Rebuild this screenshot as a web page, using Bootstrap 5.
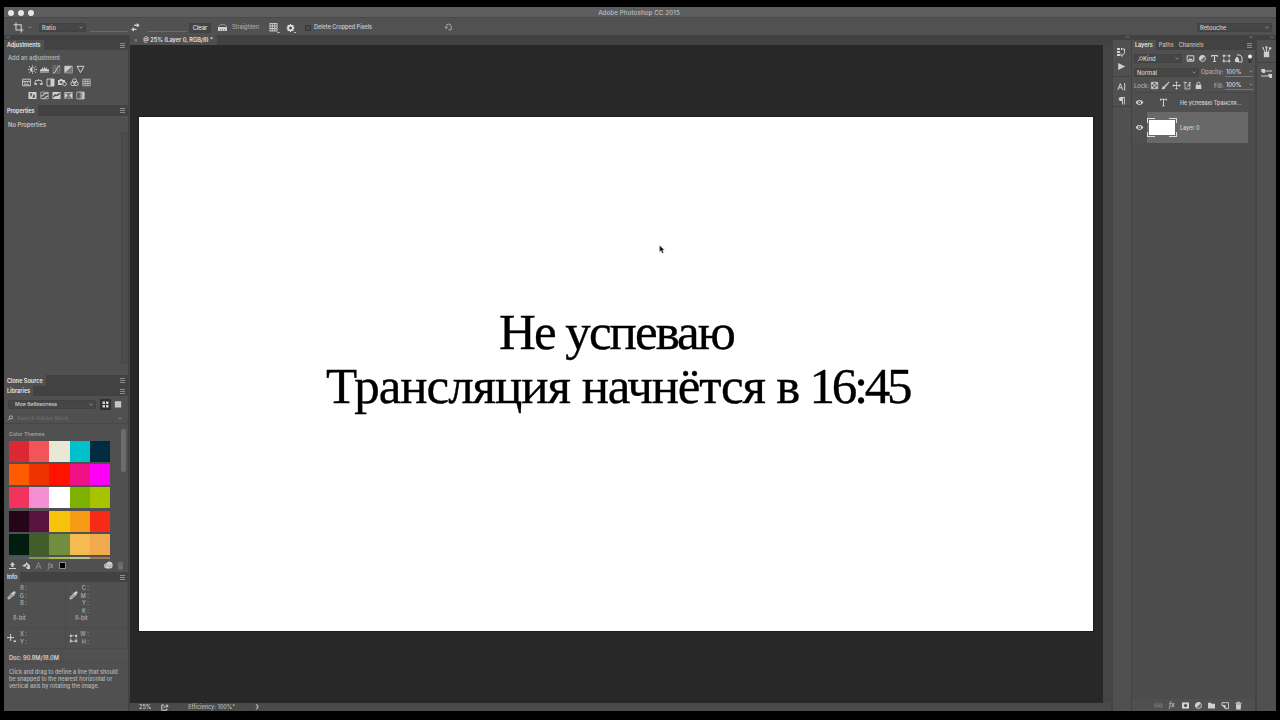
<!DOCTYPE html>
<html lang="en">
<head>
<meta charset="utf-8">
<title>Adobe Photoshop CC 2015</title>
<meta name="viewport" content="width=device-width, initial-scale=1">
<link href="https://cdn.jsdelivr.net/npm/bootstrap@5.3.0/dist/css/bootstrap.min.css" rel="stylesheet">
<style>
body{background:#000;width:1280px;height:720px;overflow:hidden;padding:7px 4px 9px;font:500 5.8px/7px Inter,"Liberation Sans",sans-serif;color:#d2d2d2}
.app{width:1272px;height:704px;background:#434343}
.t{white-space:nowrap;display:block}
.dim{color:#a9a9a9}.faint{color:#6c6c6c}
svg{display:block;fill:#d0d0d0;flex:none}
.i{width:9px;height:9px}
.s{fill:none;stroke:#d0d0d0}
.titlebar{height:11px;background:#5d5d5d;border-bottom:1px solid #494949;padding-top:1px}
.titlebar .lights{width:80px;padding-left:4px;gap:4px}
.titlebar i{width:6px;height:6px;border-radius:50%;background:#e6e6e6;display:block}
.titlebar .name{color:#bdbdbd;font-size:6.2px;letter-spacing:.1px;width:1110px;text-align:center}
.options{height:17px;background:#515151;display:grid;align-items:center;padding-top:2px;
 grid-template-columns:9px 11px 5px 10px 47px 4px 38px 3px 11px 6px 39px 2px 22px 7px 9px 5px 32px 5px 11px 6px 10px 9px 7px 2px 80px 50px 9px 744px 75px}
.options .cut{font-size:5.5px}
.pick{height:9px;background:#464646;border:1px solid #424242;border-radius:1px;padding:0 2px;display:flex;align-items:center;justify-content:space-between}
.caret{flex:none;width:4px;height:3px;fill:none;stroke:#999;stroke-width:.8}
.field{border-bottom:1px solid #6b6b6b;height:9px}
.clearbtn{background:#434343;height:10px;border-radius:1px;line-height:10px;text-align:center;color:#e6e6e6}
.check{width:6px;height:6px;border:1px solid #383838;background:#494949}
.main{height:676px}
.leftdock{width:125px;background:#505050;border-right:1px solid #424242}
.strip{height:5px;background:#414141;color:#888;font-size:5px;line-height:5px;padding:0 2px}
.head{background:#424242;padding-right:3px;height:10px}
.head .on{background:#505050;color:#e9e9e9;font-weight:600;font-size:5.5px;padding:0 3px;height:100%;line-height:11px}
.head .off{color:#b5b5b5;font-weight:600;line-height:11px;font-size:5.5px}
.burger{width:5px;height:5px;border-top:1px solid #8c8c8c;border-bottom:1px solid #8c8c8c}
.burger:after{content:"";display:block;height:1px;background:#8c8c8c;margin-top:1px}
.adj{height:55px;padding:4px 0 0 4px;color:#bdbdbd}
.adj .icons{width:96px;padding-top:1.5px}
.adj .icons>div{height:13.4px;gap:3px;justify-content:center;display:flex;align-items:center}
.props{height:259px;padding:5px 0 0 4px}
.props .rail{width:7px;height:232px;background:#4b4b4b;border-left:1px solid #464646;margin-top:11px}
.head.tall{height:11px}.head.tall .on{line-height:12px}
.libs{height:176px}
.libs .top{height:17px;display:grid;grid-template-columns:88px 4px 11px 2px 10px;padding-left:4px;align-items:center}
.libs .cut{font-size:5.3px}
.libs .lib{font-size:5.2px}
.viewbtn{height:11px;background:#303030;border-radius:1px;display:flex;align-items:center;justify-content:center}
.search{height:11px;padding:0 2px 0 3px;border-bottom:1px solid #474747}
.themes{height:134px;padding:7px 0 0 5px}
.themes .list{width:102px;height:118px;margin-top:2.5px;overflow:hidden}
.themes .rowc{height:21px;margin-bottom:2.4px;width:101px}
.themes .rowc b{flex:1;display:block}
.thumb{width:5px;height:43px;border-radius:3px;background:#6d6d6d;margin:-2px 2px 0 0}
.lfoot{height:14px;display:grid;grid-template-columns:9px 5px 9px 3px 9px 3px 9px 3px 9px 37px 9px 3px 9px;padding-left:4px;align-items:center}
.info{color:#b0b0b0;font-size:5.5px}
.cells{display:grid;grid-template-columns:62px 62px}
.cells>div{border-right:1px solid #4a4a4a;border-bottom:1px solid #4a4a4a}
.cells .k{line-height:7.5px;width:10px;text-align:right;font-size:5.5px;margin-left:1px}
.cells .i{margin-top:6px}
.c1{height:46px;padding:3px 0 0 3px}.c2{height:21px;padding:3px 0 0 3px}
.cells .c2 .i{margin-top:3px}
.bits{padding-left:6px}
.doc{height:14px;padding:5px 0 0 5px;border-bottom:1px solid #4a4a4a;color:#e0e0e0;font-size:5.7px}
.tip{padding:6px 0 0 5px;color:#b9b9b9}
.work{width:981px;margin-left:1px}
.tabs{height:10px;background:#424242}
.tabs .on{width:87px;background:#4f4f4f;color:#e3e3e3;font-weight:600;font-size:5.6px;line-height:11px;height:10px;gap:5.5px;padding-left:4px}
.stage{height:658px;background:#282828;width:973px;padding:72px 0 0 9px}
.gutter{width:8px;background:#454545}
.paper{width:954px;height:514px;background:#fff;color:#000;position:relative;padding:188px 0 0;font:51px/54px "Liberation Serif","Times New Roman",serif;outline:1px solid #1f1f1f;-webkit-text-stroke:.35px #000}
.paper .l1{letter-spacing:-1.95px;margin-left:360px}
.paper .l2{margin-left:187px}
.w1{letter-spacing:-1.02px}.w2{letter-spacing:-1.2px}.w3{letter-spacing:-1.5px;margin-right:-.5px}.w4{letter-spacing:-3.3px}
.cursor{position:absolute;left:520px;top:128px;width:6px;height:9px}
.status{height:8px;background:#4a4a4a;padding-left:9px;font-size:5.5px;line-height:8px;color:#d0d0d0}
.share{margin-left:10px}.eff{margin-left:19px;color:#b8b8b8}.arrow{margin-left:20px;font-size:4.5px}
.idock{width:18px;background:#505050;margin-left:2px}
.idock .cellb{border-bottom:1px solid #424242;height:37px;padding:7px 1px 0 0;gap:5px}
.idock .cellb.g2{height:30px;padding-top:5px;gap:5px}
.layers{width:124px;background:#4c4c4c;margin-left:1px}
.layers .head .off{margin-left:3px}
.layers .head .chan{margin-left:5px}
.lrow{display:grid;align-items:center}
.lk{height:16px;grid-template-columns:48px 4px 9px 3px 9px 3px 9px 3px 9px 3px 9px 5px 4px;padding:1px 0 0 2px;background:#505050}
.lm{height:12px;grid-template-columns:65px 2px 22px 2px 28px;padding-left:2px;background:#505050}
.lm .lab{font-size:5.6px}
.ll{height:15px;grid-template-columns:16px 9px 2px 9px 2px 9px 2px 9px 2px 9px 11px 11px 28px;padding-left:2px;background:#505050;border-bottom:1px solid #484848}
.ll .t,.lm .lab{color:#b0b0b0}.ll .num .t{color:#ddd}
.num{border-bottom:1px solid #777;padding-left:1px;height:9px}
.item{height:19px;width:116px;grid-template-columns:15px 33px 68px;background:#4f4f4f;font-size:5.5px}
.item .t{padding-top:2px}
.item.sel .bg2{background:#686868;height:100%;grid-column:2/4;display:grid;grid-template-columns:33px 68px;align-items:center}
.item.sel{height:31px}
.ey{margin-left:3px}
.ptr{background:#fff;width:26px;height:15px;margin-left:2px}
.thumbbox{width:30px;height:19px;padding:2px 0 0;background:
 linear-gradient(#ddd,#ddd) 0 0/8px 1px,linear-gradient(#ddd,#ddd) 0 0/1px 5px,
 linear-gradient(#ddd,#ddd) 100% 0/8px 1px,linear-gradient(#ddd,#ddd) 100% 0/1px 5px,
 linear-gradient(#ddd,#ddd) 0 100%/8px 1px,linear-gradient(#ddd,#ddd) 0 100%/1px 5px,
 linear-gradient(#ddd,#ddd) 100% 100%/8px 1px,linear-gradient(#ddd,#ddd) 100% 100%/1px 5px;background-repeat:no-repeat}
.layfoot{height:12px;background:#505050;gap:4.4px;padding-left:22px}
.rdock{width:19px;background:#505050;margin-left:2px}
.r1{height:23px;padding-top:6px;border-bottom:1px solid #424242}.r2{padding-top:6px}
</style>
</head>
<body>
<svg width="0" height="0" class="position-absolute">
 <linearGradient id="gg"><stop offset=".1" stop-color="#333"/><stop offset="1" stop-color="#ddd"/></linearGradient>
 <symbol id="caret" viewBox="0 0 4 3"><path d="M.5.6 2 2.2 3.5.6"/></symbol>
 <symbol id="bright" viewBox="0 0 9 9"><path d="M4.5 2a2.5 2.5 0 000 5zM4.1 0h.8v1.4h-.8zM4.1 7.6h.8V9h-.8zM0 4.1h1.4v.8H0zM7.6 4.1H9v.8H7.6zM1.2.9l1 1-.6.5-.9-.9zM7.8.9l-1 1 .6.5.9-.9zM1.2 8.1l1-1-.6-.5-.9.9zM7.8 8.1l-1-1 .6-.5.9.9z"/><path d="M4.5 2.2a2.3 2.3 0 010 4.6" fill="none" stroke="#d0d0d0" stroke-width=".6"/></symbol>
 <symbol id="levels" viewBox="0 0 9 9"><path d="M0 6V5l1-1 .6.8L2.4 2l.8 2.5L4.4 1.6l.9 2.7L6.3 2l.9 2.6L8 4l1 1v1zM0 6.6h9v.8H0z"/></symbol>
 <symbol id="curves" viewBox="0 0 9 9"><path d="M1 .8h7v7.4H1zM3.3.8v7.4M5.6.8v7.4M1 3.2h7M1 5.7h7" fill="none" stroke="#8a8a8a" stroke-width=".6"/><path d="M1 8c4 0 3-7 7-7" fill="none" stroke="#ddd" stroke-width=".8"/></symbol>
 <symbol id="expo" viewBox="0 0 9 9"><path d="M.8 1.2h7.4v6.6H.8z" fill="none" stroke="#d0d0d0" stroke-width=".8"/><path d="M8.2 1.2v6.6H.8z" fill="#777"/><path d="M.8 1.2h7.4L.8 7.8z"/></symbol>
 <symbol id="vib" viewBox="0 0 9 9"><path d="M1 1.3h7L4.5 7.6z" fill="none" stroke="#d0d0d0"/></symbol>
 <symbol id="hue" viewBox="0 0 9 9"><path d="M.6 1.2h7.8v6.6H.6zM.6 3.4h7.8M3 3.4v2M5.6 3.4v1.4M2 6.3h5" fill="none" stroke="#d0d0d0" stroke-width=".9"/></symbol>
 <symbol id="bal" viewBox="0 0 9 9"><path d="M4.5 1v1M1.5 2.4h6M1.8 2.4L.7 5.2M7.2 2.4l1.1 2.8" fill="none" stroke="#d0d0d0" stroke-width=".9"/><path d="M0 5.2h3.4c0 2.4-3.4 2.4-3.4 0zM5.6 5.2H9c0 2.4-3.4 2.4-3.4 0z"/></symbol>
 <symbol id="bw" viewBox="0 0 9 9"><path d="M1 1h7v7H1z" fill="none" stroke="#d0d0d0" stroke-width=".9"/><path d="M4.5 1H8v7H4.5z"/></symbol>
 <symbol id="cam" viewBox="0 0 9 9"><path d="M0 2h1.5l.6-1h2l.7 1H7v2.2A2 2 0 004.5 7H0z"/><circle cx="6.6" cy="6" r="1.8" fill="none" stroke="#d0d0d0" stroke-width=".8"/><circle cx="3.1" cy="4.2" r="1.3" fill="#505050"/></symbol>
 <symbol id="mix" viewBox="0 0 9 9"><g fill="none" stroke="#d0d0d0" stroke-width=".9"><circle cx="4.5" cy="2.9" r="2.1"/><circle cx="2.9" cy="5.6" r="2.1"/><circle cx="6.1" cy="5.6" r="2.1"/></g></symbol>
 <symbol id="grid" viewBox="0 0 9 9"><path d="M.8 1.2h7.4v6.6H.8zM3.3 1.2v6.6M5.8 1.2v6.6M.8 3.4h7.4M.8 5.6h7.4" fill="none" stroke="#c4c4c4" stroke-width=".8"/></symbol>
 <symbol id="inv" viewBox="0 0 9 9"><path d="M.5 1h8v7h-8z"/><path d="M2.3 2.3h2.2L3.2 5.5H2.3zM6.8 6.7H4.3l1.3-3.2h1.2z" fill="#505050"/></symbol>
 <symbol id="post" viewBox="0 0 9 9"><path d="M.8 1.2h7.4v6.6H.8z" fill="none" stroke="#b5b5b5" stroke-width=".8"/><path d="M.8 5.5l2.5-.3 1-2 4-.8v-1L4 2 2.6 4.2.8 4.5zM.8 7.8l4-1 1-1.7 2.4-.6v1L6.4 6 5.6 7.8z"/></symbol>
 <symbol id="thr" viewBox="0 0 9 9"><path d="M.5 1h8v7h-8z"/><path d="M1.2 4.8L3.5 3l1 .7L7.8 1.8v1.5L5 5.2 4 4.5 1.2 6.7z" fill="#444"/></symbol>
 <symbol id="sel" viewBox="0 0 9 9"><path d="M.5 1h8v7h-8z"/><path d="M1.3 1.7l3.2 3 3.2-3M1.3 7.3l3.2-3 3.2 3z" fill="#777" stroke="#555" stroke-width=".6"/></symbol>
 <symbol id="gmap" viewBox="0 0 9 9"><path d="M.9 1.1h7.2v6.8H.9z" fill="url(#gg)" stroke="#d0d0d0" stroke-width=".8"/></symbol>
 <symbol id="eye" viewBox="0 0 9 9"><path d="M.7 4.5C2.5 1.3 6.5 1.3 8.3 4.5 6.5 7.7 2.5 7.7.7 4.5z"/><circle cx="4.5" cy="4.5" r="1.5" fill="#444"/><circle cx="4.5" cy="4.5" r=".6"/></symbol>
 <symbol id="half" viewBox="0 0 9 9"><circle cx="4.5" cy="4.5" r="3" fill="#6a6a6a" stroke="#d0d0d0" stroke-width=".8"/><path d="M6.8 2.2a3.2 3.2 0 00-4.6 4.6z"/></symbol>
 <symbol id="drop" viewBox="0 0 9 9"><path d="M5.2 1.8L6.8.4c1-.5 2.1.6 1.7 1.6L7.1 3.6l.6.7-.9.8L4 2.4l.8-.9z"/><path d="M4.4 3L1.3 6.2 1 8l1.8-.4L6 4.6" fill="#999" stroke="#d0d0d0" stroke-width=".9"/></symbol>
 <symbol id="trash" viewBox="0 0 9 9"><path d="M1.3 1.7h2V.8h2.4v.9h2v1H1.3zM1.9 3.2h5.2L6.7 8.4H2.3z"/></symbol>
 <symbol id="mag" viewBox="0 0 9 9"><path d="M3.8 5.3L1 8M6 1.2a2.4 2.4 0 110 4.8 2.4 2.4 0 010-4.8" fill="none" stroke="#c8c8c8" stroke-width="1.2"/></symbol>
 <symbol id="xf" viewBox="0 0 9 9"><path d="M1.8 1.8h5.4v5.4H1.8z" fill="none" stroke="#d0d0d0" stroke-width=".8" stroke-dasharray="3 1"/><path d="M.8.8h2v2h-2zM6.2.8h2v2h-2zM.8 6.2h2v2h-2zM6.2 6.2h2v2h-2z"/></symbol>
</svg>

<div class="app">
 <header class="titlebar d-flex align-items-center">
  <div class="lights d-flex"><i></i><i></i><i></i></div>
  <span class="t name">Adobe Photoshop CC 2015</span>
 </header>

 <div class="options">
  <span></span>
  <svg width="11" height="11" viewBox="0 0 11 11" class="s"><path d="M3 .5V8h7.5M.5 2.8h7.7v7.7" stroke-width="1.1"/></svg>
  <svg class="caret ms-1"><use href="#caret"/></svg><span></span>
  <div class="pick"><span class="t">Ratio</span><svg class="caret"><use href="#caret"/></svg></div><span></span>
  <div class="field"></div><span></span>
  <svg width="9" height="9" viewBox="0 0 9 9"><path d="M5.8 0l3 2.2-3 2.2V3H3.2V1.5h2.6zM3 4.3V5.7h2.5V7H3v1.5L0 6.4z"/></svg><span></span>
  <div class="field"></div><span></span>
  <div class="clearbtn t">Clear</div><span></span>
  <svg width="9" height="9" viewBox="0 0 9 9"><path d="M0 4h9v4H0z"/><path d="M.6 3.6C1.5.8 7.5.8 8.4 3.6" fill="none" stroke="#aaa" stroke-width=".8"/><path d="M2.5 6v2M4.5 6v2M6.5 6v2" stroke="#777" stroke-width=".6"/></svg><span></span>
  <span class="t dim cut">Straighten</span><span></span>
  <svg width="11" height="11" viewBox="0 0 11 11"><path d="M1 1.5h7v7.5H1zM3.3 1v8.5M5.7 1v8.5M1 4h7M1 6.5h7" fill="none" stroke="#c4c4c4" stroke-width="1.1"/><path d="M8.5 10h2v1h-2z"/></svg><span></span>
  <svg width="10" height="10" viewBox="0 0 10 10"><circle cx="4.5" cy="5" r="2.4" fill="none" stroke="#e0e0e0" stroke-width="1.8"/><path d="M4.5 1v1.4M4.5 7.6V9M.5 5h1.4M7.1 5h1.4M1.7 2.2l1 1M7.3 2.2l-1 1M1.7 7.8l1-1M7.3 7.8l-1-1" stroke="#e0e0e0" stroke-width="1.1"/><path d="M8.3 9h1.7v1H8.3z"/></svg><span></span>
  <div class="check"></div><span></span>
  <span class="t cut">Delete Cropped Pixels</span><span></span>
  <svg width="9" height="9" viewBox="0 0 9 9" class="s"><path d="M2.2 5.4V3.6a2.5 2.5 0 015 0v3.2H4.4M.7 3.9l1.5 1.7 1.5-1.7" stroke="#a8a8a8"/></svg><span></span>
  <div class="pick"><span class="t">Retouche</span><svg class="caret"><use href="#caret"/></svg></div>
 </div>

 <div class="main d-flex">
  <aside class="leftdock d-flex flex-column">
   <div class="strip t">‹‹</div>
   <div class="head d-flex align-items-center justify-content-between"><span class="on t">Adjustments</span><span class="burger"></span></div>
   <div class="adj"><span class="t">Add an adjustment</span>
    <div class="icons">
     <div><svg class="i"><use href="#bright"/></svg><svg class="i"><use href="#levels"/></svg><svg class="i"><use href="#curves"/></svg><svg class="i"><use href="#expo"/></svg><svg class="i"><use href="#vib"/></svg></div>
     <div><svg class="i"><use href="#hue"/></svg><svg class="i"><use href="#bal"/></svg><svg class="i"><use href="#bw"/></svg><svg class="i"><use href="#cam"/></svg><svg class="i"><use href="#mix"/></svg><svg class="i"><use href="#grid"/></svg></div>
     <div><svg class="i"><use href="#inv"/></svg><svg class="i"><use href="#post"/></svg><svg class="i"><use href="#thr"/></svg><svg class="i"><use href="#sel"/></svg><svg class="i"><use href="#gmap"/></svg></div>
    </div>
   </div>
   <div class="head tall d-flex align-items-center justify-content-between"><span class="on t">Properties</span><span class="burger"></span></div>
   <div class="props d-flex justify-content-between"><span class="t">No Properties</span><div class="rail"></div></div>
   <div class="head tall d-flex align-items-center justify-content-between"><span class="on t">Clone Source</span><span class="burger"></span></div>
   <div class="head d-flex align-items-center justify-content-between"><span class="on t">Libraries</span><span class="burger"></span></div>
   <div class="libs">
    <div class="top"><div class="pick"><span class="t ps-1 lib">Моя библиотека</span><svg class="caret"><use href="#caret"/></svg></div><span></span>
     <div class="viewbtn"><svg width="7" height="7" viewBox="0 0 7 7"><path d="M.5.5H3V3H.5zM4 .5h2.5V3H4zM.5 4H3v2.5H.5zM4 4h2.5v2.5H4z"/></svg></div><span></span>
     <svg width="10" height="9" viewBox="0 0 10 9"><path d="M2 1.5h6v1.7H2zM2 3.5h6v1.7H2zM2 5.5h6v1.7H2z" stroke="#c4c4c4" stroke-width=".5"/></svg></div>
    <div class="search d-flex align-items-center justify-content-between"><div class="d-flex align-items-center"><svg width="6" height="6" class="me-1"><use href="#mag"/></svg><span class="t faint cut">Search Adobe Stock</span></div><svg class="caret me-1"><use href="#caret"/></svg></div>
    <div class="themes d-flex justify-content-between">
     <div><span class="t dim cut">Color Themes</span>
      <div class="list" id="swatches"></div></div>
     <div class="thumb"></div>
    </div>
    <div class="lfoot">
     <svg class="i"><path d="M4.5 1L7 4H5.5v2h-2V4H2zM1 7h7v1H1z"/></svg><span></span>
     <svg class="i"><path d="M0 5l4-2.5V1l4 3.5V8H5L4 6z"/><circle cx="4.6" cy="5" r="1" fill="#505050"/></svg><span></span>
     <svg class="i" viewBox="0 0 9 9"><path d="M1.8 8l2.7-6.6L7.2 8M2.8 5.8h3.4" fill="none" stroke="#858585"/></svg><span></span>
     <span class="t fst-italic dim text-center">fx</span><span></span>
     <svg class="i" viewBox="0 0 9 9"><path d="M1.5 1.5h6v6h-6z" fill="#000" stroke="#aaa" stroke-width=".8"/></svg><span></span>
     <svg class="i" viewBox="0 0 9 9"><path d="M2.8 7.4a2.6 2.6 0 01-.3-5.2A3.3 3.3 0 018.6 4.3c.3 2-1.3 3.1-2.6 3.1z"/><path d="M2.4 5.8a1.1 1.1 0 110-2.2c1 0 2 2.2 3.4 2.2a1.1 1.1 0 000-2.2" fill="none" stroke="#777" stroke-width=".6"/></svg><span></span>
     <svg class="i opacity-25"><use href="#trash"/></svg>
    </div>
   </div>
   <div class="head d-flex align-items-center justify-content-between"><span class="on t">Info</span><span class="burger"></span></div>
   <div class="info">
    <div class="cells">
     <div class="c1"><div class="d-flex"><svg class="i"><use href="#drop"/></svg><div class="k">R :<br>G :<br>B :<br>&nbsp;</div></div><span class="t bits">8-bit</span></div>
     <div class="c1"><div class="d-flex"><svg class="i"><use href="#drop"/></svg><div class="k">C :<br>M :<br>Y :<br>K :</div></div><span class="t bits">8-bit</span></div>
     <div class="c2"><div class="d-flex"><svg class="i" viewBox="0 0 9 9"><path d="M3.6 0v7M0 3.6h7" stroke="#d0d0d0"/><path d="M6.5 6.5H9V8H6.5z"/></svg><div class="k">X :<br>Y :</div></div></div>
     <div class="c2"><div class="d-flex"><svg class="i"><use href="#xf"/></svg><div class="k">W :<br>H :</div></div></div>
    </div>
    <div class="doc t">Doc: 90.8M/18.0M</div>
    <div class="tip t">Click and drag to define a line that should<br>be snapped to the nearest horizontal or<br>vertical axis by rotating the image.</div>
   </div>
  </aside>

  <main class="work d-flex flex-column">
   <div class="tabs"><div class="on t d-flex"><span class="dim fw-normal">×</span><span>@ 25% (Layer 0, RGB/8) *</span></div></div>
   <div class="d-flex">
    <div class="stage">
     <div class="paper">
      <span class="t l1">Не успеваю</span>
      <span class="t l2"><span class="w1">Трансляция </span><span class="w2">начнётся </span><span class="w3">в </span><span class="w4">16:45</span></span>
      <svg class="cursor" viewBox="0 0 6 9"><path d="M.6.4v6.4l1.5-1.3 1.2 2.7 1.2-.6-1.1-2.5h2z" fill="#111" stroke="#bbb" stroke-width=".4"/></svg>
     </div>
    </div>
    <div class="gutter"></div>
   </div>
   <div class="status d-flex align-items-center"><span class="t">25%</span><svg width="8" height="7" viewBox="0 0 8 7" class="s share"><path d="M3 1H.8v5.2h5V4.5M3 4C3 2.6 4 2 6.6 2M5.4.5L7.2 2 5.4 3.4"/></svg><span class="t eff">Efficiency: 100%*</span><span class="t arrow">❯</span></div>
  </main>

  <aside class="idock">
   <div class="strip t text-end">››</div>
   <div class="cellb d-flex flex-column align-items-center">
    <svg width="9" height="10" viewBox="0 0 9 10"><path d="M0 1h3v2H0zM0 4h3v2H0zM0 7h3v2H0z"/><path d="M4.5 2h3v3.3c0 1.5-1 2.5-2.5 3M4.5 1v2M4 6.4V9h1.5" fill="none" stroke="#d0d0d0"/></svg>
    <svg width="9" height="9" viewBox="0 0 9 9"><path d="M1.2 1v7l7-3.5z"/></svg>
   </div>
   <div class="cellb d-flex flex-column align-items-center g2">
    <svg width="9" height="9" viewBox="0 0 9 9" class="s"><path d="M.8 8l2.5-6.4L5.8 8M1.7 5.8h3.2M7.7 1v7.5"/></svg>
    <svg width="9" height="9" viewBox="0 0 9 9"><path d="M7.8 1v7.4H6.9V1.9H5.9v6.5H5V5.3C.8 5.3.8 1 4.3 1z"/></svg>
   </div>
  </aside>

  <aside class="layers d-flex flex-column">
   <div class="strip t text-end">››</div>
   <div class="head d-flex align-items-center"><span class="on t">Layers</span><span class="off t">Paths</span><span class="off t chan">Channels</span><span class="burger ms-auto"></span></div>
   <div class="lrow lk"><div class="pick"><span class="d-flex align-items-center"><svg width="6" height="6"><use href="#mag"/></svg><span class="t">Kind</span></span><svg class="caret"><use href="#caret"/></svg></div><span></span>
    <svg class="i" viewBox="0 0 9 9"><path d="M1.2 1.8h6.6v5.4H1.2z" fill="none" stroke="#d0d0d0"/><path d="M2 6.5L3.5 4l1 1.2 1-1L7 6.5z"/></svg><span></span>
    <svg class="i"><use href="#half"/></svg><span></span>
    <svg class="i" viewBox="0 0 9 9"><path d="M1.2 1h6.6v2h-.9l-.5-1H5.1v5l1 .3V8H2.9v-.7l1-.3V2H2.6l-.5 1h-.9z"/></svg><span></span>
    <svg class="i"><use href="#xf"/></svg><span></span>
    <svg class="i" viewBox="0 0 9 9"><path d="M3 1h3l2 2v5H3.5" fill="none" stroke="#d0d0d0"/><path d="M1 4.5h4V8H1zM2 4.5V3h2v1.5"/></svg><span></span>
    <svg width="4" height="10" viewBox="0 0 4 10"><circle cx="2" cy="2.5" r="2" fill="#eee"/><path d="M.5 5h3v4h-3z" fill="#383838"/></svg></div>
   <div class="lrow lm"><div class="pick"><span class="t">Normal</span><svg class="caret"><use href="#caret"/></svg></div><span></span><span class="t lab">Opacity:</span><span></span><div class="num d-flex align-items-center justify-content-between"><span class="t">100%</span><svg class="caret"><use href="#caret"/></svg></div></div>
   <div class="lrow ll"><span class="t">Lock:</span>
    <svg class="i" viewBox="0 0 9 9"><path d="M1.3 1.3h6.4v6.4H1.3z" fill="none" stroke="#d0d0d0" stroke-width=".8"/><path d="M1.5 1.5h2v2h-2zM5.5 1.5h2v2h-2zM3.5 3.5h2v2h-2zM1.5 5.5h2v2h-2zM5.5 5.5h2v2h-2z"/></svg><span></span>
    <svg class="i" viewBox="0 0 9 9"><path d="M8 .7L3.4 5l.9.9L8.4 1.2zM3 5.3c-1.5 0-1 1.8-2.3 2.4 1.6.7 3.3.2 3.4-1.3z" stroke="#d0d0d0" stroke-width=".4"/></svg><span></span>
    <svg class="i" viewBox="0 0 9 9"><path d="M4.5.3L5.9 2H4.9v2.1H7V3.1l1.7 1.4L7 5.9v-1H4.9V7h1L4.5 8.7 3.1 7h1V4.9H2v1L.3 4.5 2 3.1v1h2.1V2h-1z"/></svg><span></span>
    <svg class="i" viewBox="0 0 9 9"><path d="M2 .5v8M.5 1.5H4M6 1.5h1.8M7 1v7H2M3.5 6.5l3-3.3M4.5 3h2v2" fill="none" stroke="#c0c0c0" stroke-width=".9"/></svg><span></span>
    <svg class="i" viewBox="0 0 9 9"><path d="M1.7 4h5.6v4H1.7z"/><path d="M3 4V2.7a1.5 1.5 0 013 0V4" fill="none" stroke="#d0d0d0"/></svg><span></span>
    <span class="t">Fill:</span><div class="num d-flex align-items-center justify-content-between"><span class="t">100%</span><svg class="caret"><use href="#caret"/></svg></div></div>
   <div class="lrow item"><svg class="i ey"><use href="#eye"/></svg><svg width="9" height="9" viewBox="0 0 9 9" class="ms-auto me-auto"><path d="M1 .8h7v2h-.7l-.5-1.1H5v5.8l1.1.2v.6H2.9v-.6L4 7.5V1.7H2.2l-.5 1.1H1z"/></svg><span class="t">Не успеваю Трансля...</span></div>
   <div class="lrow item sel"><svg class="i ey"><use href="#eye"/></svg><div class="bg2"><div class="thumbbox"><div class="ptr"></div></div><span class="t">Layer 0</span></div></div>
   <div class="flex-grow-1"></div>
   <div class="layfoot d-flex align-items-center">
    <svg class="i opacity-50" viewBox="0 0 9 9"><path d="M3.8 3H2a1.5 1.5 0 000 3h1.8M5.2 3H7a1.5 1.5 0 010 3H5.2M2.7 4.5h3.6" fill="none" stroke="#bbb" stroke-width=".8"/></svg>
    <span class="i t fst-italic text-center">fx</span>
    <svg class="i" viewBox="0 0 9 9"><path d="M1 1.4h7v6.2H1z"/><circle cx="4.5" cy="4.5" r="1.5" fill="#444"/></svg>
    <svg class="i"><use href="#half"/></svg>
    <svg class="i" viewBox="0 0 9 9"><path d="M1 1.8h3l.7 1H8v4.7H1z"/></svg>
    <svg class="i" viewBox="0 0 9 9"><path d="M1 1.7h6.5v6H4.2V4.6H1z" fill="none" stroke="#c8c8c8"/><path d="M1 4.6l3.2 3.1V4.6z"/></svg>
    <svg class="i"><use href="#trash"/></svg>
   </div>
  </aside>

  <aside class="rdock">
   <div class="strip t text-end">››</div>
   <div class="d-flex flex-column align-items-center r1"><svg width="11" height="12" viewBox="0 0 11 12"><path d="M2.8 6h5.4v5.2H2.8z"/><path d="M4 6L2 2M5.5 6V1.5M7 6l2-3.5" stroke="#d0d0d0" stroke-width="1"/><path d="M.8.8L3 1.6v2zM4.5.3h2v2.2h-2zM8 1.3h2.3v2H8z"/></svg></div>
   <div class="d-flex flex-column align-items-center r2"><svg width="11" height="9" viewBox="0 0 11 9"><path d="M0 2h11M0 7h11" stroke="#d0d0d0" stroke-width="1.1"/><path d="M0 0h4v4H1.5zM7 5h4v4H8.5z"/></svg></div>
  </aside>
 </div>
</div>
<script src="https://cdn.jsdelivr.net/npm/bootstrap@5.3.0/dist/js/bootstrap.bundle.min.js"></script>
<script>
const themes=[["#dc2832","#f25557","#e8e8d6","#00c1cb","#002b40"],["#ff5a00","#ef3300","#ff1200","#ef1083","#ff00f6"],["#f2335d","#f48fd6","#ffffff","#7eb000","#a9c200"],["#260419","#59133f","#f5c20c","#f79a16","#f72a18"],["#001d0f","#425c2a","#718e3c","#f4bb50","#f2aa4e"],["#4a5a62","#7f9a4b","#a6bd52","#b9c684","#9b7a5b"]];
document.getElementById('swatches').innerHTML=themes.map(r=>'<div class="rowc d-flex">'+r.map(c=>'<b style="background:'+c+'"></b>').join('')+'</div>').join('');
</script>
</body>
</html>
